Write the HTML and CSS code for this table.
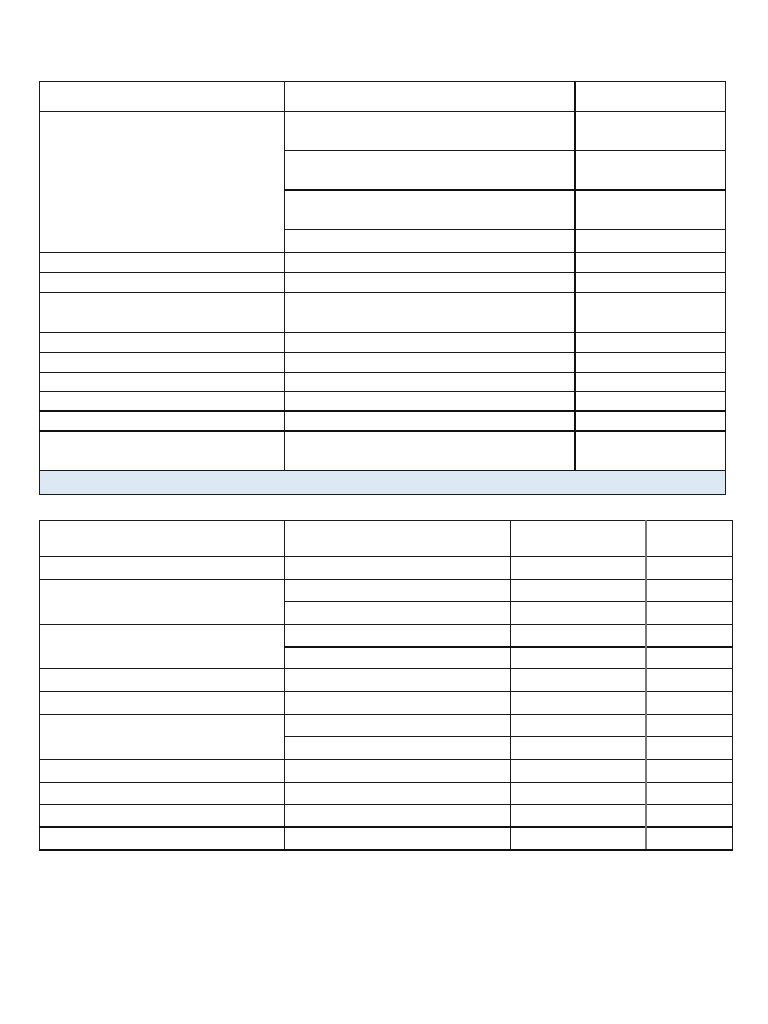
FILE: index.html
```html
<!DOCTYPE html>
<html>
<head>
<meta charset="utf-8">
<link rel="stylesheet" href="styles.css">
</head>
<body>
<div class="page">
  <table class="grid t1">
    <colgroup><col class="c1a"><col class="c1b"><col class="c1c"></colgroup>
    <tr class="h30"><td></td><td></td><td class="vthick"></td></tr>
    <tr class="h39"><td rowspan="4"></td><td></td><td class="vthick"></td></tr>
    <tr class="h39"><td></td><td class="vthick"></td></tr>
    <tr class="h40 topthick"><td></td><td class="vthick"></td></tr>
    <tr class="h23"><td></td><td class="vthick"></td></tr>
    <tr class="h20"><td></td><td></td><td class="vthick"></td></tr>
    <tr class="h20"><td></td><td></td><td class="vthick"></td></tr>
    <tr class="h40"><td></td><td></td><td class="vthick"></td></tr>
    <tr class="h20"><td></td><td></td><td class="vthick"></td></tr>
    <tr class="h20"><td></td><td></td><td class="vthick"></td></tr>
    <tr class="h19"><td></td><td></td><td class="vthick"></td></tr>
    <tr class="h19"><td></td><td></td><td class="vthick"></td></tr>
    <tr class="h20 topthick"><td></td><td></td><td class="vthick"></td></tr>
    <tr class="h40 topthick"><td></td><td></td><td class="vthick"></td></tr>
    <tr class="h24"><td colspan="3" class="band"></td></tr>
  </table>

  <table class="grid t2">
    <colgroup><col class="c2a"><col class="c2b"><col class="c2c"><col class="c2d"></colgroup>
    <tr class="h36"><td></td><td></td><td></td><td class="vgray"></td></tr>
    <tr class="h23"><td></td><td></td><td></td><td class="vgray"></td></tr>
    <tr class="h22"><td rowspan="2"></td><td></td><td></td><td class="vgray"></td></tr>
    <tr class="h23"><td></td><td></td><td class="vgray"></td></tr>
    <tr class="h22"><td rowspan="2"></td><td></td><td></td><td class="vgray"></td></tr>
    <tr class="h22 topthick"><td></td><td></td><td class="vgray"></td></tr>
    <tr class="h23"><td></td><td></td><td></td><td class="vgray"></td></tr>
    <tr class="h23"><td></td><td></td><td></td><td class="vgray"></td></tr>
    <tr class="h22"><td rowspan="2"></td><td></td><td></td><td class="vgray"></td></tr>
    <tr class="h23"><td></td><td></td><td class="vgray"></td></tr>
    <tr class="h23"><td></td><td></td><td></td><td class="vgray"></td></tr>
    <tr class="h22"><td></td><td></td><td></td><td class="vgray"></td></tr>
    <tr class="h22"><td></td><td></td><td></td><td class="vgray"></td></tr>
    <tr class="h23 topthick bottomthick"><td></td><td></td><td></td><td class="vgray"></td></tr>
  </table>
</div>
</body>
</html>
```

FILE: styles.css
```css
html, body {
  margin: 0;
  padding: 0;
  background: #ffffff;
  font-family: "Liberation Sans", Arial, sans-serif;
}

.page {
  padding: 81px 0 0 39px;
  display: flex;
  flex-direction: column;
  gap: 25px;
  align-items: flex-start;
}

.grid {
  border-collapse: collapse;
  table-layout: fixed;
  border: 1.5px solid #1a1a1a;
}

.grid td {
  border: 1px solid #1a1a1a;
  padding: 0;
}

.t1 { width: 686px; }
.c1a { width: 245px; }
.c1b { width: 290px; }
.c1c { width: 151px; }

.t2 { width: 693px; }
.c2a { width: 245px; }
.c2b { width: 226px; }
.c2c { width: 135px; }
.c2d { width: 87px; }

.t1 .vthick { border-left: 2px solid #111111; }
.t2 .vgray { border-left: 2px solid #777777; }

.topthick td { border-top: 2px solid #111111; }
.bottomthick td { border-bottom: 2px solid #111111; }

.band {
  background: #dce9f5;
  border: 1.5px solid #555555;
}

.h19 { height: 19px; }
.h20 { height: 20px; }
.h22 { height: 22px; }
.h23 { height: 23px; }
.h24 { height: 24px; }
.h30 { height: 30px; }
.h36 { height: 36px; }
.h39 { height: 39px; }
.h40 { height: 40px; }
```
